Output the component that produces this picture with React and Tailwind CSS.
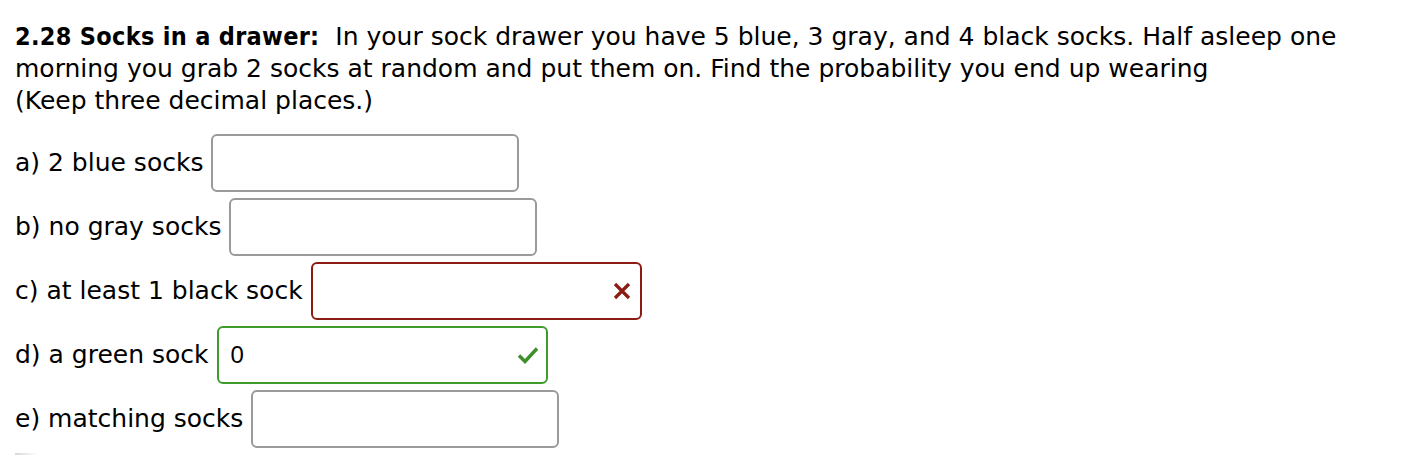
import React from "react";

const rows = [
  { label: "a) 2 blue socks", state: "none", value: "" },
  { label: "b) no gray socks", state: "none", value: "" },
  { label: "c) at least 1 black sock", state: "wrong", value: "" },
  { label: "d) a green sock", state: "right", value: "0" },
  { label: "e) matching socks", state: "none", value: "" },
];

function Cross() {
  return (
    <svg width="18" height="18" viewBox="0 0 18 18" className="absolute right-[9px] top-1/2 -translate-y-1/2">
      <path d="M2 2 L16 16 M16 2 L2 16" stroke="#8c1c13" strokeWidth="3.2" fill="none" />
    </svg>
  );
}

function Check() {
  return (
    <svg width="22" height="18" viewBox="0 0 22 18" className="absolute right-[7px] top-1/2 -translate-y-1/2">
      <path d="M2 9.5 L8 15.5 L20 2.5" stroke="#3d8f2a" strokeWidth="3.4" fill="none" />
    </svg>
  );
}

function AnswerRow({ label, state, value }) {
  const border =
    state === "wrong"
      ? "border-[#8c1c13] w-[331px]"
      : state === "right"
      ? "border-[#3f9b2c] w-[331px]"
      : "border-[#9a9a9a] w-[308px]";
  return (
    <div className="flex items-center gap-[8px] h-[58px] mb-[6px]">
      <span>{label}</span>
      <div className={`relative h-[58px] rounded-[6px] border-2 bg-white ${border}`}>
        <input
          readOnly
          value={value}
          className="w-full h-full bg-transparent outline-none pl-[12px] text-[24px] text-black font-['Liberation_Sans',sans-serif]"
        />
        {state === "wrong" && <Cross />}
        {state === "right" && <Check />}
      </div>
    </div>
  );
}

export default function App() {
  return (
    <div className="min-h-screen bg-white text-black font-['DejaVu_Sans',sans-serif] text-[25px] leading-[32px] pl-[15px] pr-[10px] pt-[21px]">
      <p className="whitespace-nowrap">
        <b className="font-['DejaVu_Sans_Condensed',sans-serif] font-bold tracking-[0.3px]">2.28 Socks in a drawer:</b>&nbsp; In your sock drawer you have 5 blue, 3 gray, and 4 black socks. Half asleep one
        <br />
        morning you grab 2 socks at random and put them on. Find the probability you end up wearing
        <br />
        (Keep three decimal places.)
      </p>
      <div className="mt-[17px]">
        {rows.map((r) => (
          <AnswerRow key={r.label} {...r} />
        ))}
      </div>
      <div className="w-[22px] h-[2px] bg-gradient-to-r from-[#d6d6d6] to-white mt-[-1px]" />
    </div>
  );
}
